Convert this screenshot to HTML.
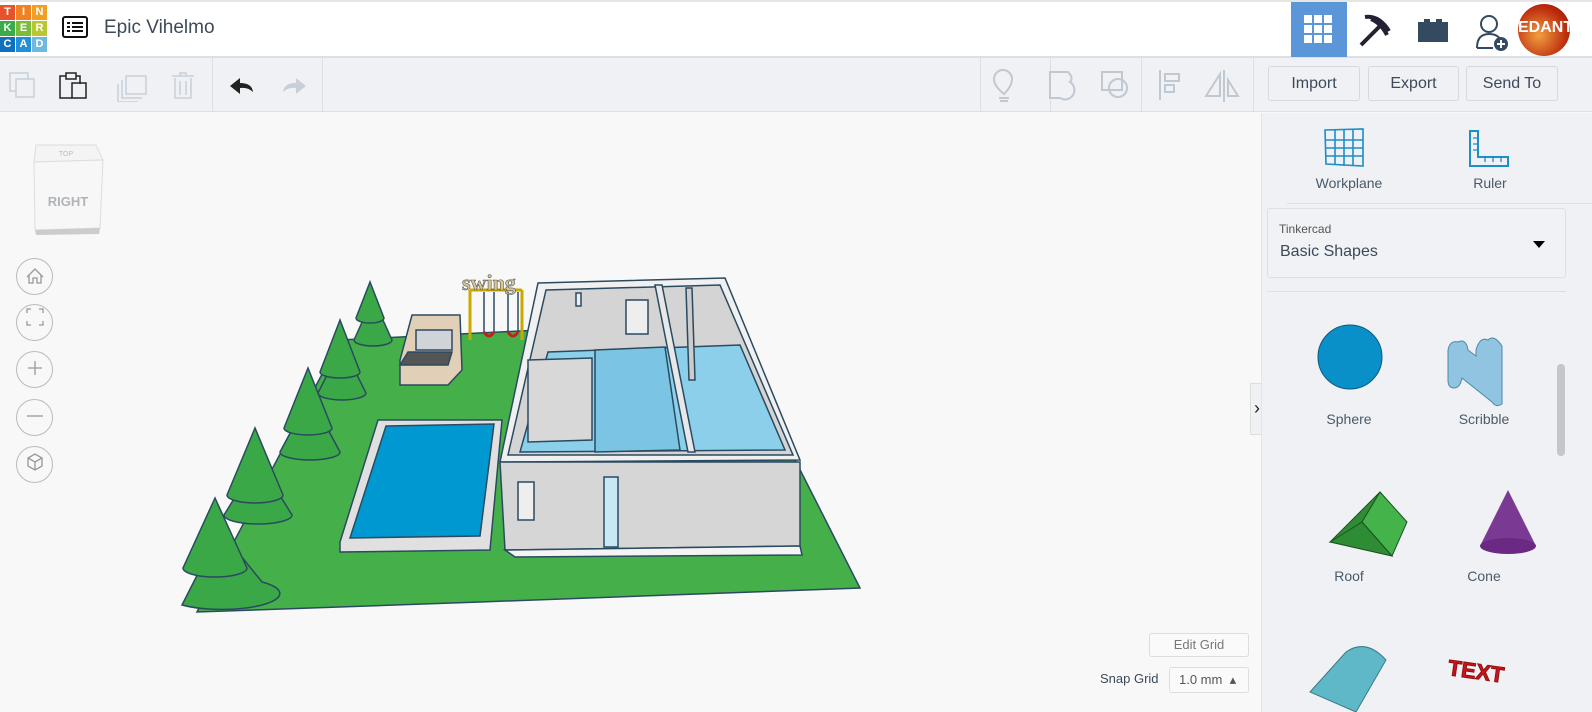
<!DOCTYPE html>
<html><head><meta charset="utf-8"><style>
*{box-sizing:border-box;margin:0;padding:0}
html,body{width:1592px;height:712px;overflow:hidden}
body{font-family:"Liberation Sans",sans-serif;background:#f8f8f8;position:relative;color:#3c4a5a}
.abs{position:absolute}
#hdr{left:0;top:0;width:1592px;height:58px;background:#fff;border-top:2px solid #e6e6e6;border-bottom:2px solid #dcdfe4}
#tb{left:0;top:58px;width:1592px;height:54px;background:#f0f1f4;border-bottom:1px solid #dcdfe4}
.logo div{position:absolute;width:15px;height:15px;color:#fff;font-weight:bold;font-size:11px;text-align:center;line-height:15px}
.btn{position:absolute;top:66px;height:35px;border:1px solid #d6d9de;border-radius:3px;background:#f0f1f4;font-size:16px;text-align:center;line-height:33px;color:#3c4a5a}
#rp{left:1261px;top:113px;width:331px;height:599px;background:#f0f1f4;border-left:1px solid #e2e4e8}
.lbl{position:absolute;font-size:14px;color:#4a5a6a;text-align:center;width:120px}
.circ{position:absolute;left:16px;width:37px;height:37px;border:1px solid #bbb;border-radius:50%;background:#f8f8f8}
.sep{position:absolute;top:58px;width:1px;height:54px;background:#dcdfe4}
</style></head><body>
<div id="hdr" class="abs"></div>
<div class="logo abs" style="left:0;top:3px;width:46px;height:48px">
<div style="left:0;top:2px;background:#e8522a">T</div><div style="left:16px;top:2px;background:#f08020">I</div><div style="left:32px;top:2px;background:#f0a020">N</div>
<div style="left:0;top:18px;background:#3aab48">K</div><div style="left:16px;top:18px;background:#7abd3a">E</div><div style="left:32px;top:18px;background:#b8c830">R</div>
<div style="left:0;top:34px;background:#1070c0">C</div><div style="left:16px;top:34px;background:#2090d8">A</div><div style="left:32px;top:34px;background:#70b8e0">D</div>
</div>
<svg class="abs" style="left:62px;top:16px" width="26" height="24"><rect x="1" y="1" width="24" height="20" rx="2" fill="none" stroke="#111" stroke-width="2"/><g fill="#111"><rect x="5" y="6" width="3" height="2"/><rect x="10" y="6" width="11" height="2"/><rect x="5" y="10" width="3" height="2"/><rect x="10" y="10" width="11" height="2"/><rect x="5" y="14" width="3" height="2"/><rect x="10" y="14" width="11" height="2"/></g></svg>
<div class="abs" style="left:104px;top:17px;font-size:19px;color:#3c4a5a">Epic Vihelmo</div>
<div class="abs" style="left:1291px;top:2px;width:56px;height:55px;background:#5a96d8"></div>
<svg class="abs" style="left:1304px;top:15px" width="30" height="30"><g fill="#fff"><rect x="0" y="0" width="8" height="8"/><rect x="10" y="0" width="8" height="8"/><rect x="20" y="0" width="8" height="8"/><rect x="0" y="10" width="8" height="8"/><rect x="10" y="10" width="8" height="8"/><rect x="20" y="10" width="8" height="8"/><rect x="0" y="20" width="8" height="8"/><rect x="10" y="20" width="8" height="8"/><rect x="20" y="20" width="8" height="8"/></g></svg>
<svg class="abs" style="left:1357px;top:13px" width="36" height="34"><path d="M4 32 L24 12 M8 4 Q22 2 32 18 M14 6 Q24 10 30 22" stroke="#223" stroke-width="4" fill="none"/></svg>
<svg class="abs" style="left:1418px;top:18px" width="30" height="24"><path d="M0 4h6v-3h6v3h6v-3h6v3h6v20h-30z" fill="#344a60"/></svg>
<svg class="abs" style="left:1475px;top:14px" width="34" height="38"><circle cx="14" cy="10" r="8" fill="none" stroke="#344a60" stroke-width="2"/><path d="M2 34 Q2 20 14 20 Q22 20 25 25 M2 34 H18" fill="none" stroke="#344a60" stroke-width="2"/><circle cx="26" cy="30" r="7" fill="#344a60"/><path d="M26 26v8M22 30h8" stroke="#fff" stroke-width="2"/></svg>
<div class="abs" style="left:1518px;top:4px;width:52px;height:52px;border-radius:50%;background:radial-gradient(circle at 40% 60%,#f0a040,#c03010 60%,#801000);overflow:hidden;color:#fff;font-weight:bold;font-size:16px;line-height:48px;text-align:center">EDANT</div>

<div id="tb" class="abs"></div>
<div class="sep" style="left:212px"></div><div class="sep" style="left:322px"></div><div class="sep" style="left:980px"></div><div class="sep" style="left:1050px"></div><div class="sep" style="left:1141px"></div><div class="sep" style="left:1253px"></div>
<svg class="abs" style="left:8px;top:70px" width="300" height="32" fill="none" stroke-width="1.5">
<rect x="2" y="3" width="18" height="18" stroke="#c8cfd8"/><rect x="8" y="9" width="18" height="18" stroke="#c8cfd8" fill="#f0f1f4"/>
<path d="M58 6h-6v22h12" stroke="#222"/><rect x="58" y="3" width="10" height="6" stroke="#222"/><path d="M68 6h4v8" stroke="#222"/><rect x="64" y="13" width="14" height="15" stroke="#222"/>
<rect x="118" y="6" width="20" height="18" stroke="#c8cfd8"/><path d="M114 10v18h20" stroke="#c8cfd8"/><path d="M110 14v18h20" stroke="#c8cfd8"/>
<path d="M164 6h22M172 6v-3h6v3M167 8v20h16v-20M172 11v14M178 11v14" stroke="#c8cfd8"/>
<path d="M222 16 L232 8 V13 Q244 13 245 22 Q240 17 232 18 V24 Z" fill="#222" stroke="none"/>
<path d="M298 16 L288 8 V13 Q276 13 275 22 Q280 17 288 18 V24 Z" fill="#c8cfd8" stroke="none"/>
</svg>
<svg class="abs" style="left:990px;top:66px" width="260" height="40" fill="none" stroke="#c0c8d2" stroke-width="2">
<path d="M14 28 Q4 20 4 13 A9 9 0 0 1 22 13 Q22 20 14 28 Z"/><path d="M9 32h10M10 35h8"/>
<path d="M60 6h18q6 6 2 10a9 9 0 0 1-10 16h-10z"/>
<rect x="112" y="6" width="20" height="18"/><circle cx="128" cy="22" r="9"/>
<path d="M170 4v30"/><rect x="175" y="8" width="14" height="7"/><rect x="175" y="19" width="9" height="7"/>
<path d="M234 4v32M230 30h-14l14-22zM238 30h10l-10-16z"/>
</svg>
<div class="btn" style="left:1268px;width:92px">Import</div>
<div class="btn" style="left:1368px;width:91px">Export</div>
<div class="btn" style="left:1466px;width:92px">Send To</div>

<svg class="abs" style="left:28px;top:140px" width="80" height="96"><polygon points="8,5 68,5 75,20 6,22" fill="#f4f4f4" stroke="#ddd"/><polygon points="6,22 75,20 72,88 7,90" fill="#f7f7f7" stroke="#ddd"/><polygon points="7,90 72,88 71,94 8,95" fill="#ccc"/><text x="40" y="66" font-size="13" font-weight="bold" fill="#b0b4b8" text-anchor="middle" font-family="Liberation Sans">RIGHT</text><text x="38" y="16" font-size="7" fill="#bbb" text-anchor="middle">TOP</text></svg>
<div class="circ" style="top:258px"></div><div class="circ" style="top:304px"></div><div class="circ" style="top:351px"></div><div class="circ" style="top:399px"></div><div class="circ" style="top:446px"></div>
<svg class="abs" style="left:16px;top:258px" width="38" height="230" fill="none" stroke="#999" stroke-width="1.3">
<path d="M11 19 L19 11 L27 19 M13 17v8h4v-5h4v5h4v-8"/>
<path d="M11 55v-4h4M23 51h4v4M27 63v4h-4M15 67h-4v-4"/>
<path d="M19 103v14M12 110h14"/>
<path d="M11 158h16"/>
<path d="M12 200l7-4 7 4v8l-7 4-7-4zM12 200l7 4 7-4M19 204v8"/>
</svg>
<div class="abs" style="left:1149px;top:633px;width:100px;height:24px;border:1px solid #ddd;border-radius:3px;background:#fafafa;font-size:13px;color:#777;text-align:center;line-height:22px">Edit Grid</div>
<div class="abs" style="left:1100px;top:671px;font-size:13px;color:#3c4a5a">Snap Grid</div>
<div class="abs" style="left:1169px;top:667px;width:80px;height:26px;border:1px solid #ddd;border-radius:3px;background:#fafafa;font-size:13px;color:#555;line-height:24px;padding-left:9px">1.0 mm &nbsp;▴</div>
<div class="abs" style="left:1250px;top:383px;width:13px;height:52px;background:#f0f1f4;border:1px solid #ddd;border-right:none;font-size:18px;line-height:48px;color:#222;text-align:center">›</div>

<svg class="abs" style="left:0;top:0" width="1260" height="712">
<g stroke="#2a4a60" stroke-width="1.5">
<polygon points="340,340 540,330 790,450 860,588 480,602 197,612" fill="#45b04a"/>
<polygon points="538,283 725,278 800,460 500,462" fill="#f0f0f0"/>
<polygon points="546,290 720,285 793,455 508,455" fill="#d4d4d4"/>
<polygon points="548,352 740,345 785,450 520,452" fill="#8ccfea"/>
<polygon points="595,350 665,347 680,450 595,452" fill="#7cc4e4"/>
<polygon points="528,360 592,358 592,440 528,442" fill="#d8d8d8"/>
<polygon points="655,285 662,285 695,452 688,452" fill="#e8e8e8"/>
<polygon points="686,288 692,288 695,380 689,380" fill="#ccc"/>
<rect x="626" y="300" width="22" height="34" fill="#eee"/>
<rect x="576" y="293" width="5" height="13" fill="#eee"/>
<polygon points="500,462 800,462 800,546 505,550" fill="#d6d6d6"/>
<polygon points="505,550 800,546 802,555 515,557" fill="#f4f4f4"/>
<rect x="518" y="482" width="16" height="38" fill="#eee"/>
<rect x="604" y="477" width="14" height="70" fill="#c8e8f4"/>
<polygon points="378,420 502,420 490,550 340,552 340,542" fill="#e0e0e0"/>
<polygon points="386,426 494,424 480,536 350,538" fill="#0098d0"/>
<polygon points="412,315 460,315 462,370 448,385 400,385 400,360" fill="#e2cfb8"/>
<polygon points="408,352 452,352 448,365 400,365" fill="#555"/>
<rect x="416" y="330" width="36" height="20" fill="#d0d4d8"/>
</g>
<g stroke="#c9a800" stroke-width="3"><path d="M470 290v50M522 290v50M470 290h52"/></g>
<g stroke="#2a4a60" stroke-width="1.5" fill="none"><path d="M484 292v40M494 292v40M508 292v40M518 292v40"/></g>
<path d="M484 332q5 8 10 0M508 332q5 8 10 0" stroke="#c02020" stroke-width="3" fill="none"/>
<text x="462" y="290" font-family="Liberation Serif" font-size="22" font-weight="bold" fill="#d8c890" stroke="#556" stroke-width="0.6">swing</text>
<g fill="#3aa846" stroke="#2a4a60" stroke-width="1.5">
<path d="M373 298 L354 340 A19 6 0 0 0 392 340 Z"/><path d="M370 282 L356 318 A14 5 0 0 0 384 318 Z"/>
<path d="M342 345 L318 393 A24 7 0 0 0 366 393 Z"/><path d="M340 320 L320 372 A20 6 0 0 0 360 372 Z"/>
<path d="M310 396 L280 452 A30 8 0 0 0 340 452 Z"/><path d="M308 368 L284 428 A24 7 0 0 0 332 428 Z"/>
<path d="M258 460 L224 515 A34 9 0 0 0 292 515 Z"/><path d="M255 428 L227 495 A28 8 0 0 0 283 495 Z"/>
<path d="M220 530 L182 605 A40 11 0 0 0 262 582 Z"/><path d="M215 498 L183 568 A32 9 0 0 0 247 568 Z"/>
</g>
</svg>

<div id="rp" class="abs"></div>
<svg class="abs" style="left:1323px;top:128px" width="200" height="40" fill="none" stroke="#1c8ec8" stroke-width="2">
<path d="M2 2 L40 1 L40 38 L3 36 Z M2 12h38M2 20h38M2 28h38M12 2v35M21 2v36M30 2v36" stroke-width="1.6"/>
<path d="M147 3h8v26h30v9h-38z"/><path d="M150 10h4M150 16h4M150 22h4M162 30v4M170 30v4M178 30v4" stroke-width="1.3"/>
</svg>
<div class="lbl" style="left:1289px;top:175px">Workplane</div>
<div class="lbl" style="left:1430px;top:175px">Ruler</div>
<div class="abs" style="left:1287px;top:203px;width:305px;height:1px;background:#dcdfe4"></div>
<div class="abs" style="left:1267px;top:208px;width:299px;height:70px;background:#f1f2f5;border:1px solid #dcdfe4;border-radius:3px"></div>
<div class="abs" style="left:1279px;top:222px;font-size:12px;color:#555">Tinkercad</div>
<div class="abs" style="left:1280px;top:243px;font-size:16px;color:#3c4a5a">Basic Shapes</div>
<div class="abs" style="left:1533px;top:241px;width:0;height:0;border-left:6px solid transparent;border-right:6px solid transparent;border-top:7px solid #000"></div>
<div class="abs" style="left:1267px;top:291px;width:299px;height:1px;background:#dcdfe4"></div>
<div class="abs" style="left:1557px;top:364px;width:8px;height:92px;border-radius:4px;background:#c4c6ca"></div>
<svg class="abs" style="left:1270px;top:300px" width="286" height="412">
<circle cx="80" cy="57" r="32" fill="#0a90c8" stroke="#0a5a80"/>
<path d="M206 50 q4-14 12-10 q6-6 14 6 v58 q-6 4-10-2 l-30-24 q-2 10-8 10 q-6 0-6-8 v-30 q2-10 10-8 q8 -4 10 8 l8 6 z" fill="#90c4e0" stroke="#4a8ab0"/>
<polygon points="90,240 60,242 110,192 125,210" fill="#2e8c34" stroke="#1a5020"/><polygon points="110,192 137,222 122,256 92,222" fill="#44b44a" stroke="#1a5020"/><polygon points="60,242 92,222 122,256" fill="#2e8c34" stroke="#1a5020"/>
<polygon points="238,190 266,246 210,246" fill="#7a3a94"/><ellipse cx="238" cy="246" rx="28" ry="8" fill="#6a2a84"/>
<path d="M40 392 l36-40 q20-14 40 8 l-30 52 z" fill="#5fb8c8" stroke="#3a7a88"/>
<text x="178" y="378" font-family="Liberation Sans" font-size="22" font-weight="bold" fill="#c8141c" stroke="#901010" transform="rotate(8 200 370)">TEXT</text>
</svg>
<div class="lbl" style="left:1289px;top:411px">Sphere</div>
<div class="lbl" style="left:1424px;top:411px">Scribble</div>
<div class="lbl" style="left:1289px;top:568px">Roof</div>
<div class="lbl" style="left:1424px;top:568px">Cone</div>
</body></html>
